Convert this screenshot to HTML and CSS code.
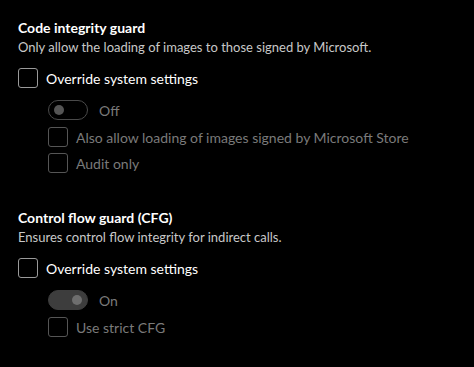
FILE: index.html
```html
<!DOCTYPE html>
<html lang="en">
<head>
    <meta charset="UTF-8">
    <meta name="viewport" content="width=device-width, initial-scale=1.0">
    <title>Exploit protection</title>
    <link rel="stylesheet" href="styles.css">
</head>
<body>
    <div class="page">
        <section class="group">
            <h2 class="group-title">Code integrity guard</h2>
            <p class="group-desc">Only allow the loading of images to those signed by Microsoft.</p>
            <label class="check">
                <span class="box"></span>
                <span>Override system settings</span>
            </label>
            <div class="sub">
                <div class="toggle-row">
                    <span class="toggle"><span class="knob"></span></span>
                    <span>Off</span>
                </div>
                <label class="check disabled">
                    <span class="box"></span>
                    <span>Also allow loading of images signed by Microsoft Store</span>
                </label>
                <label class="check disabled">
                    <span class="box"></span>
                    <span>Audit only</span>
                </label>
            </div>
        </section>

        <section class="group">
            <h2 class="group-title">Control flow guard (CFG)</h2>
            <p class="group-desc">Ensures control flow integrity for indirect calls.</p>
            <label class="check">
                <span class="box"></span>
                <span>Override system settings</span>
            </label>
            <div class="sub">
                <div class="toggle-row">
                    <span class="toggle on"><span class="knob"></span></span>
                    <span>On</span>
                </div>
                <label class="check disabled">
                    <span class="box"></span>
                    <span>Use strict CFG</span>
                </label>
            </div>
        </section>
    </div>
</body>
</html>
```

FILE: styles.css
```css
body{
    margin: 0;
    background: #000;
    color: #fff;
    font-family: "Lato", "Noto Sans", sans-serif;
}
.page{
    display: flex;
    flex-direction: column;
    gap: 35px;
    padding: 18px 18px 0 18px;
}
.group{
    display: flex;
    flex-direction: column;
}
.group-title{
    margin: 0;
    font-size: 14px;
    font-weight: 700;
    line-height: 20px;
}
.group-desc{
    margin: 0 0 12px 0;
    font-size: 13px;
    line-height: 18px;
    color: #c8c8c8;
}
.check{
    display: flex;
    align-items: center;
    gap: 8px;
    height: 20px;
    font-size: 14px;
    color: #fff;
}
.box{
    width: 18px;
    height: 18px;
    border: 1px solid #9a9a9a;
    border-radius: 3px;
    flex-shrink: 0;
}
.sub{
    display: flex;
    flex-direction: column;
    gap: 6px;
    padding-left: 30px;
    margin-top: 12px;
}
.check.disabled{
    color: #7a7a7a;
}
.check.disabled .box{
    border-color: #555;
}
.toggle-row{
    display: flex;
    align-items: center;
    gap: 11px;
    height: 20px;
    font-size: 14px;
    color: #7a7a7a;
    margin-bottom: 1px;
}
.toggle{
    position: relative;
    width: 38px;
    height: 18px;
    border: 1px solid #4a4a4a;
    border-radius: 10px;
}
.knob{
    position: absolute;
    top: 4px;
    left: 5px;
    width: 10px;
    height: 10px;
    border-radius: 50%;
    background: #555;
}
.toggle.on{
    background: #3d3d3d;
    border-color: #3d3d3d;
}
.toggle.on .knob{
    left: auto;
    right: 5px;
    background: #6e6e6e;
}
```
